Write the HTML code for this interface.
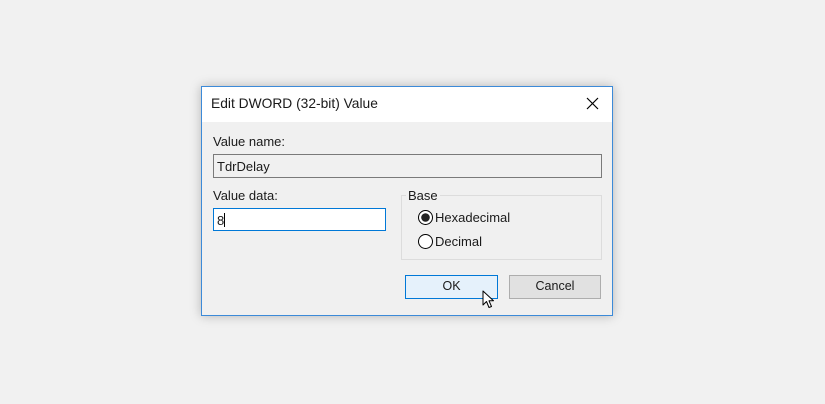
<!DOCTYPE html>
<html><head><style>
body{margin:0;width:825px;height:404px;background:#f1f1f1;position:relative;font-family:"Liberation Sans",sans-serif;font-size:12px;color:#1a1a1a;overflow:hidden}
.dlg{position:absolute;left:201px;top:86px;width:410px;height:228px;border:1px solid #3c8ad8;background:#f0f0f0;box-shadow:0 0 10px rgba(0,0,0,.25)}
.tb{position:absolute;left:0;top:0;right:0;height:35px;background:#fff}
.t{position:absolute;font-size:13px}
.abs{position:absolute}
.box{position:absolute;box-sizing:border-box}
.btn{position:absolute;box-sizing:border-box;text-align:center;line-height:21px;font-size:12.5px}
</style></head><body>
<div class="dlg">
 <div class="tb"></div>
 <div class="t" style="left:9px;top:9px;font-size:13.8px">Edit DWORD (32-bit) Value</div>
 <svg class="abs" style="left:384px;top:10px" width="13" height="13"><path d="M1 1L12 12M12 1L1 12" stroke="#000" stroke-width="1.2"/></svg>
 <div class="t" style="left:11px;top:47px">Value name:</div>
 <div class="box" style="left:11px;top:67px;width:389px;height:24px;border:1px solid #7a7a7a;background:#f0f0f0"><span class="t" style="left:3px;top:4px">TdrDelay</span></div>
 <div class="t" style="left:11px;top:101px">Value data:</div>
 <div class="box" style="left:11px;top:121px;width:173px;height:23px;border:1px solid #0078d7;background:#fff"><span class="t" style="left:3px;top:4px">8</span><span class="abs" style="left:10px;top:4px;width:1px;height:14px;background:#000"></span></div>
 <div class="box" style="left:199px;top:108px;width:201px;height:65px;border:1px solid #dcdcdc"></div>
 <div class="t" style="left:204px;top:101px;background:#f0f0f0;padding:0 2px">Base</div>
 <svg class="abs" style="left:215px;top:122px" width="17" height="17"><circle cx="8.5" cy="8.5" r="7" fill="#fff" stroke="#000"/><circle cx="8.5" cy="8.5" r="4.3" fill="#222"/></svg>
 <div class="t" style="left:233px;top:123px">Hexadecimal</div>
 <svg class="abs" style="left:215px;top:146px" width="17" height="17"><circle cx="8.5" cy="8.5" r="7" fill="#fff" stroke="#000"/></svg>
 <div class="t" style="left:233px;top:147px">Decimal</div>
 <div class="btn" style="left:203px;top:188px;width:93px;height:24px;border:1px solid #0078d7;background:#e5f1fb">OK</div>
 <div class="btn" style="left:307px;top:188px;width:92px;height:24px;border:1px solid #adadad;background:#e1e1e1">Cancel</div>
 <svg class="abs" style="left:280px;top:203px" width="14" height="20"><path d="M1 1V15L4.5 11.5L7 17.5L9.5 16.5L7 10.8H11.5Z" fill="#fff" stroke="#000" stroke-width="1" stroke-linejoin="round"/></svg>
</div>
</body></html>
